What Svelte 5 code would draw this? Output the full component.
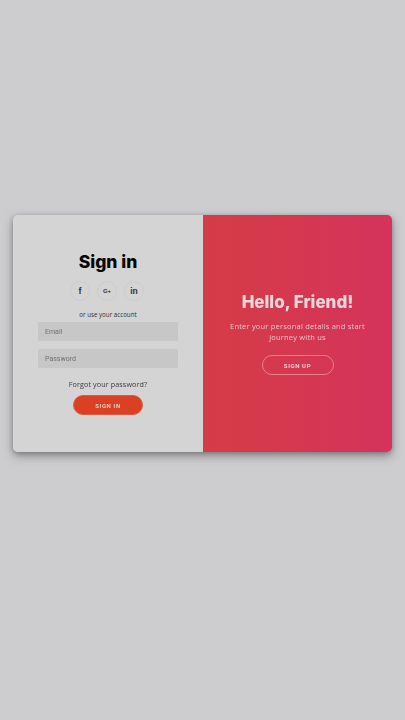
<script>
  const socials = [
    { label: 'f', cls: 'fb' },
    { label: 'G+', cls: 'gp' },
    { label: 'in', cls: 'li' }
  ];
</script>

<main class="page">
  <section class="card">
    <form class="signin" onsubmit={(e) => e.preventDefault()}>
      <h1>Sign in</h1>
      <div class="socials">
        {#each socials as s}
          <a href="#top" class="social {s.cls}">{s.label}</a>
        {/each}
      </div>
      <span class="hint">or use your account</span>
      <input type="email" placeholder="Email" />
      <input type="password" placeholder="Password" />
      <a href="#top" class="forgot">Forgot your password?</a>
      <button class="primary">SIGN IN</button>
    </form>
    <div class="overlay">
      <h2>Hello, Friend!</h2>
      <p>Enter your personal details and start journey with us</p>
      <button class="ghost">SIGN UP</button>
    </div>
  </section>
</main>

<style>
  :global(body) {
    margin: 0;
    background: #cdcdcf;
  }
  .page {
    height: 720px;
    box-sizing: border-box;
    padding: 215px 13px 0;
    font-family: "Open Sans", "Liberation Sans", sans-serif;
  }
  .card {
    display: grid;
    grid-template-columns: 190px 189px;
    height: 237px;
    border-radius: 5px;
    overflow: hidden;
    box-shadow: 0 4px 10px rgba(70, 70, 75, 0.5), 0 1px 4px rgba(70, 70, 75, 0.3);
    filter: blur(0.3px);
  }
  .signin {
    background: #d4d4d4;
    display: flex;
    flex-direction: column;
    align-items: center;
    padding: 35px 0 0;
    box-sizing: border-box;
  }
  h1 {
    margin: 0;
    font: 800 17.5px/24px "Inter", sans-serif;
    color: #050505;
  }
  .socials {
    display: flex;
    gap: 7px;
    margin: 7px 2px 0 0;
  }
  .social {
    width: 18px;
    height: 18px;
    border: 1px solid #cccccc;
    border-radius: 50%;
    display: flex;
    align-items: center;
    justify-content: center;
    color: #333;
    text-decoration: none;
    font-family: "Liberation Sans", sans-serif;
    font-weight: 700;
  }
  .fb { font-size: 9px; }
  .gp { font-size: 6px; }
  .li { font-size: 8.5px; }
  .hint {
    margin-top: 9px;
    font-size: 6.2px;
    line-height: 10px;
    color: #333;
  }
  input {
    width: 140px;
    height: 19px;
    box-sizing: border-box;
    border: 0;
    outline: 0;
    margin: 0;
    padding: 0 7px;
    background: #c7c7c8;
    font-family: "Roboto", sans-serif;
    font-size: 7px;
    border-radius: 1px;
  }
  input::placeholder { color: #707072; opacity: 1; }
  input[type="email"] { margin-top: 2px; }
  input[type="password"] { margin-top: 8px; }
  .forgot {
    margin-top: 11px;
    font-size: 7.2px;
    line-height: 11px;
    letter-spacing: 0.1px;
    color: #3a3a3a;
    text-decoration: none;
  }
  button {
    height: 20px;
    border-radius: 10px;
    padding: 0;
    font-family: "Roboto", sans-serif;
    font-weight: 700;
    font-size: 6px;
    letter-spacing: 0.6px;
  }
  .primary {
    width: 70px;
    margin-top: 5px;
    background: #db3f24;
    border: 1px solid #e05a42;
    color: #f0d0c8;
  }
  .overlay {
    background: linear-gradient(to right, #d53c46, #d5335b);
    display: flex;
    flex-direction: column;
    align-items: center;
    padding: 75px 16px 0;
    box-sizing: border-box;
    text-align: center;
  }
  h2 {
    margin: 0;
    font: 800 17px/24px "Inter", sans-serif;
    color: #ecd6d9;
  }
  p {
    margin: 7px 0 0;
    font-size: 7.5px;
    line-height: 10.5px;
    letter-spacing: 0.2px;
    color: #e8c4c8;
  }
  .ghost {
    margin-top: 13px;
    width: 72px;
    background: transparent;
    border: 1px solid #e8808c;
    color: #eed2d6;
  }
</style>
